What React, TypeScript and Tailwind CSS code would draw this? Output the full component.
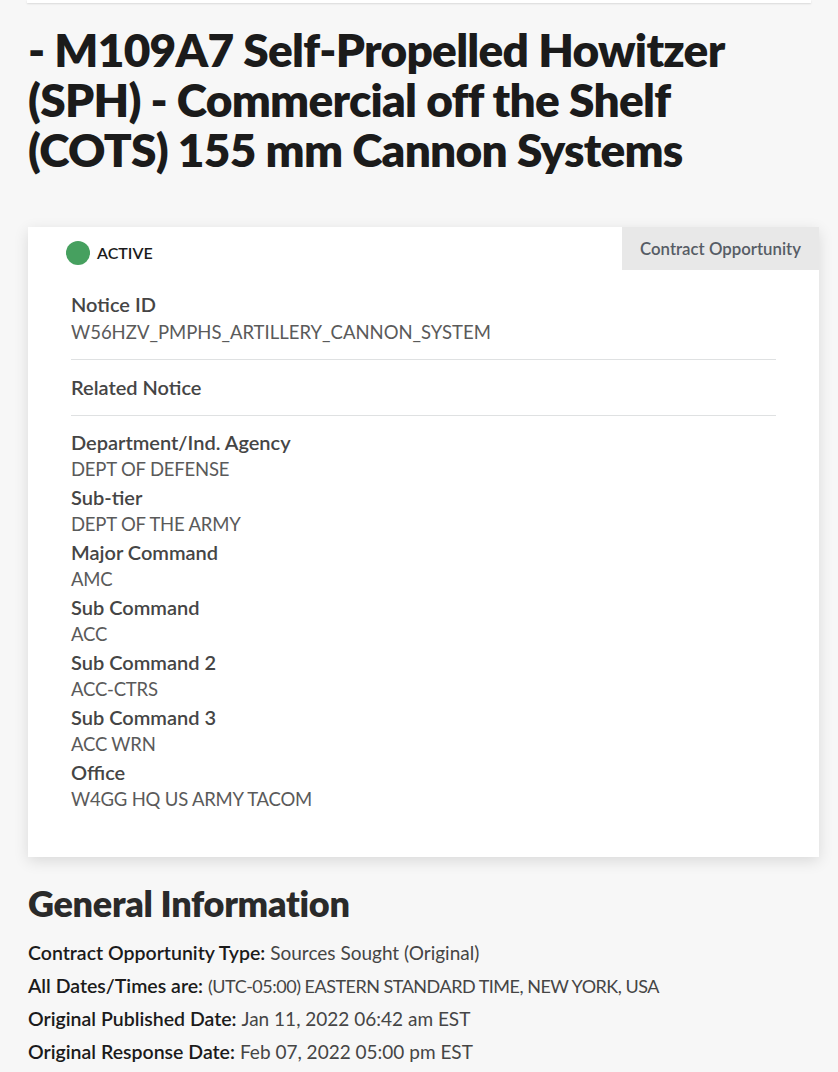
import React from "react";

const fields: [string, string][] = [
  ["Department/Ind. Agency", "DEPT OF DEFENSE"],
  ["Sub-tier", "DEPT OF THE ARMY"],
  ["Major Command", "AMC"],
  ["Sub Command", "ACC"],
  ["Sub Command 2", "ACC-CTRS"],
  ["Sub Command 3", "ACC WRN"],
  ["Office", "W4GG HQ US ARMY TACOM"],
];

const general: [string, string, string][] = [
  ["Contract Opportunity Type:", "Sources Sought (Original)", "text-[19px]"],
  ["All Dates/Times are:", "(UTC-05:00) EASTERN STANDARD TIME, NEW YORK, USA", "text-[18px] tracking-[-0.5px]"],
  ["Original Published Date:", "Jan 11, 2022 06:42 am EST", "text-[19px]"],
  ["Original Response Date:", "Feb 07, 2022 05:00 pm EST", "text-[19px]"],
];

export default function App() {
  return (
    <div
      className="min-h-[1072px] w-[838px] overflow-hidden bg-[#f7f7f7] text-[#1b1b1b]"
      style={{ fontFamily: '"Lato", "Open Sans", sans-serif' }}
    >
      <div className="mx-[27px] h-[3px] bg-white shadow-[0_1px_2px_rgba(0,0,0,0.12)]" />

      <h1 className="ml-[28px] mt-[22px] pr-[60px] text-[46px] font-extrabold leading-[50px] tracking-[-0.75px] text-[#1b1b1b]">
        - M109A7 Self-Propelled Howitzer (SPH) - Commercial off the Shelf (COTS) 155 mm Cannon Systems
      </h1>

      <div className="ml-[28px] mt-[52px] w-[791px] bg-white pb-[43px] shadow-[0_4px_14px_rgba(0,0,0,0.12)]">
        <div className="flex items-start justify-between">
          <div className="flex items-center gap-[7px] pl-[38px] pt-[14px]">
            <span className="block h-[24px] w-[24px] rounded-full bg-[#46a05f]" />
            <span className="text-[16px] font-semibold text-[#1b1b1b]">ACTIVE</span>
          </div>
          <div className="flex h-[43px] w-[197px] items-center justify-center bg-[#e8e8e8] text-[16.8px] font-semibold text-[#565c65]">
            Contract Opportunity
          </div>
        </div>

        <div className="mx-[43px] mt-[21px] text-[20px] leading-[27.5px]">
          <div className="pb-[13px]">
            <div className="font-semibold text-[#454545]">Notice ID</div>
            <div className="text-[18.5px] font-normal text-[#5a5a5a]">W56HZV_PMPHS_ARTILLERY_CANNON_SYSTEM</div>
          </div>
          <div className="border-t border-[#dfe1e2] pb-[13px] pt-[14px]">
            <div className="font-semibold text-[#454545]">Related Notice</div>
          </div>
          <div className="border-t border-[#dfe1e2] pt-[13px]">
            {fields.map(([label, value]) => (
              <div key={label}>
                <div className="font-semibold text-[#454545]">{label}</div>
                <div className="text-[18.5px] font-normal tracking-[-0.2px] text-[#5a5a5a]">{value}</div>
              </div>
            ))}
          </div>
        </div>
      </div>

      <h2 className="ml-[28px] mt-[24px] text-[36px] font-extrabold leading-[44px] tracking-[-0.3px] text-[#2a2a2a]">
        General Information
      </h2>
      <div className="ml-[28px] mt-[11px] flex flex-col">
        {general.map(([label, value, cls]) => (
          <div key={label} className="flex h-[33px] items-baseline gap-[5px] whitespace-nowrap">
            <span className="text-[19.5px] font-semibold leading-[33px] text-[#1b1b1b]">{label}</span>
            <span className={`font-normal leading-[33px] text-[#454545] ${cls}`}>{value}</span>
          </div>
        ))}
      </div>
    </div>
  );
}
